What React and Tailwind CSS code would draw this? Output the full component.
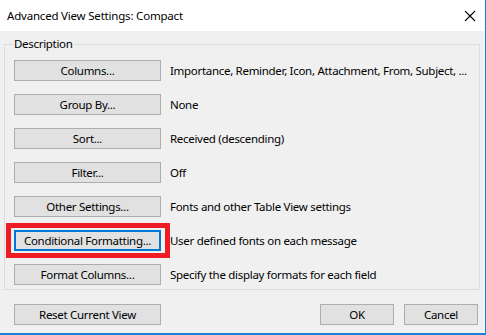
const rows = [
  { label: "Columns...", desc: "Importance, Reminder, Icon, Attachment, From, Subject, ..." },
  { label: "Group By...", desc: "None" },
  { label: "Sort...", desc: "Received (descending)" },
  { label: "Filter...", desc: "Off" },
  { label: "Other Settings...", desc: "Fonts and other Table View settings" },
  { label: "Conditional Formatting...", desc: "User defined fonts on each message", focused: true },
  { label: "Format Columns...", desc: "Specify the display formats for each field" },
];

const WinButton = ({ children, focused, className = "" }) => (
  <button
    className={
      "shrink-0 h-[21px] bg-[#e1e1e1] text-[11.5px] tracking-[-0.3px] text-black leading-none flex items-center justify-center " +
      (focused ? "border-2 border-[#0078d7] " : "border border-[#adadad] ") +
      className
    }
  >
    {children}
  </button>
);

export default function App() {
  return (
    <div
      className="relative w-[486px] h-[335px] bg-[#f0f0f0] border-r border-b-2 border-[#1883d7] text-black overflow-hidden"
      style={{ fontFamily: '"Noto Sans", "Open Sans", sans-serif' }}
    >
      {/* Title bar */}
      <div className="h-[31px] bg-white flex items-center justify-between pl-[7px] pr-[9px]">
        <span className="text-[11.5px] tracking-[-0.2px] pt-[1px]">Advanced View Settings: Compact</span>
        <svg width="12" height="12" viewBox="0 0 12 12" className="mt-[1px]">
          <path d="M1 1 L11 11 M11 1 L1 11" stroke="#000" strokeWidth="1.1" />
        </svg>
      </div>

      {/* Group box */}
      <div className="relative ml-[4px] mt-[13px] w-[476px] h-[246px] border border-[#dcdcdc] pl-[9px] pt-[15px]">
        <span className="absolute left-[8px] -top-[10px] bg-[#f0f0f0] px-[1px] text-[11.5px] tracking-[-0.3px]">Description</span>
        <div className="flex flex-col gap-[13px]">
          {rows.map((r) => (
            <div key={r.label} className="flex items-center gap-[9px]">
              <WinButton focused={r.focused} className="w-[147px]">{r.label}</WinButton>
              <span className="text-[11.5px] tracking-[-0.3px] whitespace-nowrap">{r.desc}</span>
            </div>
          ))}
        </div>
      </div>

      {/* Bottom buttons */}
      <div className="flex items-center mt-[14px] pl-[14px] pr-[7px]">
        <WinButton className="w-[147px]">Reset Current View</WinButton>
        <div className="flex-1" />
        <WinButton className="w-[74px]">OK</WinButton>
        <WinButton className="w-[74px] ml-[10px]">Cancel</WinButton>
      </div>

      {/* Red annotation highlight */}
      <div className="absolute left-[6px] top-[223px] w-[164px] h-[35px] border-[5px] border-[#ed1c24] pointer-events-none" />
    </div>
  );
}
